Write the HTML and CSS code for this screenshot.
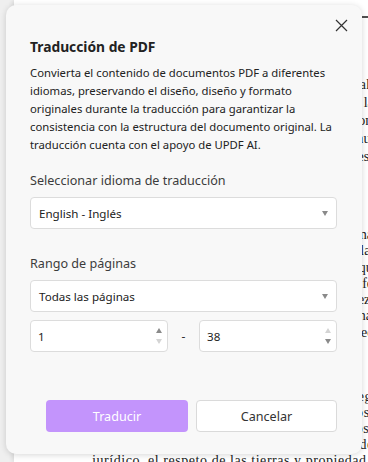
FILE: index.html
```html
<!DOCTYPE html>
<html lang="es">
<head>
<meta charset="utf-8">
<link rel="stylesheet" href="styles.css">
</head>
<body>
<div class="page">
  <div class="rule"></div>
  <div class="doc p1">
    <p>El acuerdo establece las bases del desarrollo rural integral</p>
    <p>y la reforma agraria con el propósito de mejorar la vida de la población</p>
    <p>campesina y garantizar el acceso a la tierra en condiciones de igualdad</p>
    <p>para todos los habitantes del territorio y sus comunidades indígenas</p>
    <p>que participan en el proceso de transformación estructural del campo</p>
    <p class="mark">ᵒ</p>
  </div>
  <div class="doc p2">
    <p>La implementación del acuerdo se realizará de manera gradual, con la</p>
    <p>participación de las comunidades y el apoyo de las instituciones del el</p>
    <p>Estado, respetando los principios de igualdad, equidad y bienestar de las</p>
    <p>familias campesinas, con enfoque territorial y diferencial en las zonas</p>
    <p>más afectadas por el conflicto armado y la pobreza rural en todo el país y</p>
    <p>el desarrollo sostenible de la economía campesina y familiar en el país del</p>
    <p>territorio nacional, así como la protección del medio ambiente en el área</p>
  </div>
  <div class="doc p3">
    <p>Asimismo se establecerán mecanismos de seguimiento y verificación de lo</p>
    <p>pactado para asegurar el cumplimiento de los compromisos adquiridos por m</p>
    <p>las partes y la garantía de los derechos de los ciudadanos, la seguridad eg</p>
    <p>de la tenencia de la tierra, la formalización de la propiedad rural y el re</p>
    <p>jurídico, el respeto de las tierras y propiedad</p>
  </div>
</div>

<div class="dialog">
  <button class="close" aria-label="Cerrar">
    <svg width="13" height="13" viewBox="0 0 13 13"><path d="M1 1L12 12M12 1L1 12" stroke="#333" stroke-width="1.2" fill="none"/></svg>
  </button>
  <h1 class="title">Traducción de PDF</h1>
  <p class="desc">Convierta el contenido de documentos PDF a diferentes idiomas, preservando el diseño, diseño y formato originales durante la traducción para garantizar la consistencia con la estructura del documento original. La traducción cuenta con el apoyo de UPDF AI.</p>

  <div class="label lang-label">Seleccionar idioma de traducción</div>
  <div class="select">
    <span>English - Inglés</span>
    <span class="caret"></span>
  </div>

  <div class="label range-label">Rango de páginas</div>
  <div class="select">
    <span>Todas las páginas</span>
    <span class="caret"></span>
  </div>

  <div class="range">
    <div class="num">
      <span>1</span>
      <span class="spin"><i class="up dim"></i><i class="down light"></i></span>
    </div>
    <span class="dash">-</span>
    <div class="num">
      <span>38</span>
      <span class="spin"><i class="up light"></i><i class="down dim"></i></span>
    </div>
  </div>

  <div class="actions">
    <button class="btn primary">Traducir</button>
    <button class="btn secondary">Cancelar</button>
  </div>
</div>
</body>
</html>
```

FILE: styles.css
```css
html, body {
  margin: 0;
  padding: 0;
}
body {
  width: 368px;
  height: 462px;
  overflow: hidden;
  background: #efefef;
  position: relative;
}
.page {
  margin-left: 14px;
  height: 462px;
  background: #ffffff;
  box-shadow: -2px 0 4px rgba(0,0,0,0.08);
  padding-top: 16px;
  box-sizing: border-box;
}
.rule {
  margin-left: 78px;
  height: 2px;
  background: #505050;
}
.doc {
  padding-left: 78px;
  font-family: "Liberation Serif", "DejaVu Serif", serif;
  font-size: 14px;
  color: #222;
  white-space: nowrap;
  overflow: hidden;
}
.doc p {
  margin: 0;
}
.p1 {
  margin-top: 58px;
  line-height: 18px;
}
.p1 .mark {
  line-height: 14px;
  font-size: 10px;
  color: #666;
}
.p2 {
  margin-top: 47px;
  line-height: 16.3px;
}
.p3 {
  margin-top: 48px;
  line-height: 16px;
  letter-spacing: 0.55px;
}

.dialog {
  position: absolute;
  left: 6px;
  top: 5px;
  width: 356px;
  height: 449px;
  box-sizing: border-box;
  background: #f8f8f8;
  border-radius: 10px;
  box-shadow: 0 1px 6px rgba(0,0,0,0.16);
  padding: 33px 25px 0 24px;
  font-family: "Noto Sans", "Open Sans", sans-serif;
  color: #222;
}
.close {
  position: absolute;
  right: 13px;
  top: 13px;
  width: 15px;
  height: 15px;
  padding: 0;
  border: 0;
  background: none;
  display: flex;
  align-items: center;
  justify-content: center;
}
.title {
  margin: 0;
  font-size: 13.8px;
  font-weight: 700;
  line-height: 18px;
  color: #222;
}
.desc {
  margin: 8px 0 0 0;
  font-size: 11.3px;
  line-height: 18px;
  color: #222;
}
.label {
  font-size: 12.6px;
  line-height: 18px;
  color: #3c3c3c;
}
.lang-label {
  margin-top: 18px;
}
.range-label {
  margin-top: 26px;
}
.select {
  margin-top: 7px;
  height: 32px;
  box-sizing: border-box;
  background: #fff;
  border: 1px solid #dcdcdc;
  border-radius: 4px;
  display: flex;
  align-items: center;
  justify-content: space-between;
  padding: 0 8px 0 8px;
  font-size: 11.6px;
  color: #222;
}
.caret {
  width: 0;
  height: 0;
  border-left: 3.5px solid transparent;
  border-right: 3.5px solid transparent;
  border-top: 5px solid #8a8a8a;
}
.range {
  margin-top: 8px;
  display: flex;
  align-items: center;
}
.num {
  width: 138px;
  height: 32px;
  box-sizing: border-box;
  background: #fff;
  border: 1px solid #dcdcdc;
  border-radius: 4px;
  display: flex;
  align-items: center;
  justify-content: space-between;
  padding: 0 5px 0 7px;
  font-size: 11.6px;
  color: #222;
}
.dash {
  flex: 1;
  text-align: center;
  font-size: 12px;
  color: #333;
}
.spin {
  display: flex;
  flex-direction: column;
  gap: 6px;
}
.spin i {
  display: block;
  width: 0;
  height: 0;
  border-left: 3.5px solid transparent;
  border-right: 3.5px solid transparent;
}
.spin .up {
  border-bottom: 5px solid #8a8a8a;
}
.spin .down {
  border-top: 5px solid #8a8a8a;
}
.spin .up.light {
  border-bottom-color: #d4d4d4;
}
.spin .down.light {
  border-top-color: #d4d4d4;
}
.actions {
  margin-top: 48px;
  display: flex;
  justify-content: flex-end;
  gap: 8px;
}
.btn {
  width: 142px;
  height: 32px;
  border-radius: 4px;
  font-family: "Noto Sans", "Open Sans", sans-serif;
  font-size: 12.6px;
  padding: 0;
}
.primary {
  background: #c394fc;
  border: 0;
  color: #ffffff;
}
.secondary {
  width: 141px;
  background: #ffffff;
  border: 1px solid #dadada;
  color: #333;
}
```
